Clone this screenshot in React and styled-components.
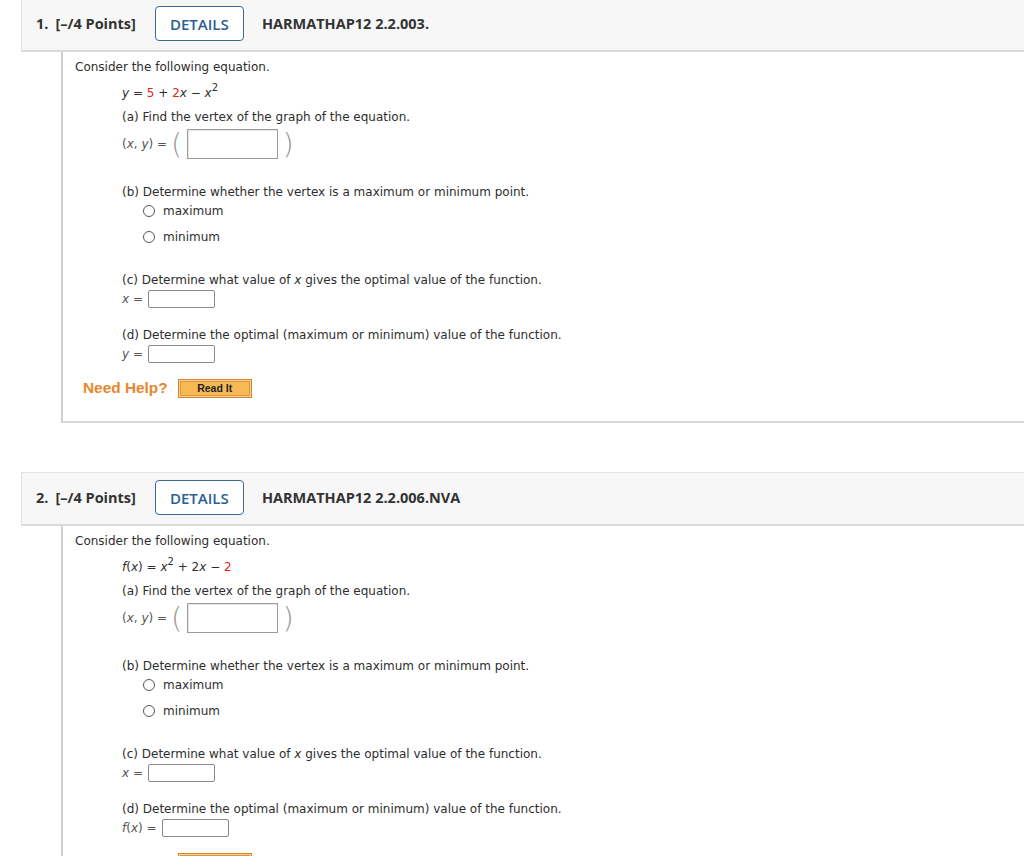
import React from "react";
import styled, { createGlobalStyle } from "styled-components";

const GlobalStyle = createGlobalStyle`
  html, body {
    margin: 0;
    padding: 0;
    background: #fff;
  }
  body {
    font-family: "DejaVu Sans", Verdana, sans-serif;
    color: #2e2e2e;
  }
`;

const questions = [
  { number: 1, code: "HARMATHAP12 2.2.003.", kind: "y" },
  { number: 2, code: "HARMATHAP12 2.2.006.NVA", kind: "f" },
];

function Equation({ kind }) {
  if (kind === "y") {
    return (
      <EquationLine>
        <I>y</I> = <Red>5</Red> + <Red>2</Red>
        <I>x</I> − <I>x</I>
        <Sup>2</Sup>
      </EquationLine>
    );
  }
  return (
    <EquationLine>
      <I>f</I>(<I>x</I>) = <I>x</I>
      <Sup>2</Sup> + 2<I>x</I> − <Red>2</Red>
    </EquationLine>
  );
}

function OptLabel({ kind }) {
  if (kind === "y") {
    return (
      <Label>
        <I>y</I> =
      </Label>
    );
  }
  return (
    <Label>
      <I>f</I>(<I>x</I>) =
    </Label>
  );
}

export default function App() {
  return (
    <>
      <GlobalStyle />
      <Page>
        {questions.map((q) => (
          <Question key={q.number}>
            <Header>
              <Points>
                {q.number}.<PointsValue>[–/4 Points]</PointsValue>
              </Points>
              <DetailsButton type="button">DETAILS</DetailsButton>
              <Code>{q.code}</Code>
            </Header>
            <Body>
              <div>Consider the following equation.</div>
              <Part>
                <Equation kind={q.kind} />
                <Line $gap={6}>(a) Find the vertex of the graph of the equation.</Line>
                <VertexRow>
                  <Label>
                    (<I>x</I>, <I>y</I>) =
                  </Label>
                  <Paren>(</Paren>
                  <VertexInput />
                  <Paren>)</Paren>
                </VertexRow>

                <Line $gap={23}>
                  (b) Determine whether the vertex is a maximum or minimum point.
                </Line>
                <RadioRow $gap={1}>
                  <Radio />
                  maximum
                </RadioRow>
                <RadioRow $gap={8}>
                  <Radio />
                  minimum
                </RadioRow>

                <Line $gap={25}>
                  (c) Determine what value of <I>x</I> gives the optimal value of the
                  function.
                </Line>
                <AnswerRow>
                  <Label>
                    <I>x</I> =
                  </Label>
                  <SmallInput />
                </AnswerRow>

                <Line $gap={18}>
                  (d) Determine the optimal (maximum or minimum) value of the function.
                </Line>
                <AnswerRow>
                  <OptLabel kind={q.kind} />
                  <SmallInput />
                </AnswerRow>
              </Part>
              <HelpRow>
                <NeedHelp>Need Help?</NeedHelp>
                <ReadIt type="button">Read It</ReadIt>
              </HelpRow>
            </Body>
          </Question>
        ))}
      </Page>
    </>
  );
}

const Page = styled.div`
  margin-top: -2px;
`;

const Question = styled.section`
  margin-left: 21px;
  margin-bottom: 49px;
`;

const Header = styled.div`
  display: flex;
  align-items: center;
  box-sizing: border-box;
  height: 54px;
  padding: 0 0 2px 14px;
  background: #f7f7f7;
  border-top: 1px solid #e2e2e2;
  border-left: 1px solid #e2e2e2;
  border-bottom: 2px solid #dadada;
  font-family: "Open Sans", "Noto Sans", sans-serif;
  font-weight: 700;
  font-size: 14.5px;
  color: #333;
`;

const Points = styled.span`
  white-space: nowrap;
`;

const PointsValue = styled.span`
  margin-left: 7px;
`;

const DetailsButton = styled.button`
  margin-left: 19px;
  width: 89px;
  height: 35px;
  border: 1px solid #3b6a9a;
  border-radius: 4px;
  background: #fff;
  color: #2b5f93;
  font-family: "Open Sans", "Noto Sans", sans-serif;
  font-weight: 600;
  font-size: 15px;
  padding: 0;
`;

const Code = styled.span`
  margin-left: 18px;
`;

const Body = styled.div`
  margin-left: 40px;
  padding: 6px 0 23px 12px;
  border-left: 2px solid #d0d0d0;
  border-bottom: 2px solid #d8d8d8;
  font-size: 12px;
  line-height: 18px;
`;

const Part = styled.div`
  padding-left: 47px;
`;

const EquationLine = styled.div`
  margin-top: 8px;
  height: 18px;
`;

const Line = styled.div`
  margin-top: ${(p) => p.$gap}px;
`;

const I = styled.i`
  font-style: oblique;
`;

const Red = styled.span`
  color: #e8251b;
`;

const Sup = styled.sup`
  font-size: 10px;
  line-height: 0;
  vertical-align: 6px;
`;

const Label = styled.span`
  color: #555;
  white-space: nowrap;
`;

const VertexRow = styled.div`
  display: flex;
  align-items: center;
  height: 32px;
  margin-top: 2px;
`;

const Paren = styled.span`
  font-family: "DejaVu Sans", sans-serif;
  font-weight: 200;
  font-size: 29px;
  line-height: 32px;
  color: #999;
  margin: 0 5px 0 4px;
`;

const VertexInput = styled.span`
  display: block;
  box-sizing: border-box;
  width: 91px;
  height: 30px;
  border: 1px solid #9c9c9c;
  box-shadow: inset 1px 1px 0 #e6e6e6;
  background: #fff;
`;

const RadioRow = styled.div`
  display: flex;
  align-items: center;
  margin-top: ${(p) => p.$gap}px;
  padding-left: 21px;
`;

const Radio = styled.span`
  box-sizing: border-box;
  width: 12px;
  height: 12px;
  border: 1px solid #555;
  border-radius: 50%;
  margin-right: 8px;
`;

const AnswerRow = styled.div`
  display: flex;
  align-items: center;
  gap: 5px;
  height: 18px;
  margin-top: 1px;
`;

const SmallInput = styled.span`
  display: block;
  box-sizing: border-box;
  width: 67px;
  height: 18px;
  border: 1px solid #8a8a8a;
  border-radius: 2px;
  background: #fff;
`;

const HelpRow = styled.div`
  display: flex;
  align-items: center;
  height: 20px;
  margin-top: 15px;
  padding-left: 8px;
`;

const NeedHelp = styled.span`
  font-family: "Liberation Sans", Arial, sans-serif;
  font-weight: 700;
  font-size: 15.4px;
  color: #e8862e;
`;

const ReadIt = styled.button`
  margin-left: 10px;
  box-sizing: border-box;
  width: 74px;
  height: 19px;
  padding: 0;
  border: 1px solid #d38632;
  background: #f6b955;
  box-shadow: inset 0 0 0 1px #fbd190, inset 0 0 0 2px #df9640;
  font-family: "Liberation Sans", Arial, sans-serif;
  font-weight: 700;
  font-size: 10.5px;
  color: #222;
`;
